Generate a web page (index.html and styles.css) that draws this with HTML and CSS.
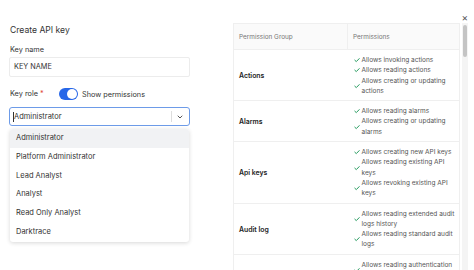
FILE: index.html
```html
<!DOCTYPE html>
<html lang="en">
  <head>
    <meta charset="UTF-8" />
    <meta name="viewport" content="width=device-width, initial-scale=1.0" />
    <title>Create API key</title>
    <link rel="stylesheet" href="styles.css">
  </head>
  <body>
    <div class="page">
      <div class="form">
        <h1>Create API key</h1>
        <label class="label">Key name</label>
        <div class="input">KEY NAME</div>
        <div class="role-row">
          <span class="label">Key role <span class="req">*</span></span>
          <span class="toggle"><span class="knob"></span></span>
          <span class="toggle-text">Show permissions</span>
        </div>
        <div class="select">
          <span class="caret"></span>
          <span class="select-value">Administrator</span>
          <span class="sep"></span>
          <svg class="chevron" width="8" height="8" viewBox="0 0 8 8">
            <path d="M2 3L4 5L6 3" fill="none" stroke="#555" stroke-width="1" stroke-linecap="round" />
          </svg>
        </div>
        <ul class="menu">
          <li class="active">Administrator</li>
          <li>Platform Administrator</li>
          <li>Lead Analyst</li>
          <li>Analyst</li>
          <li>Read Only Analyst</li>
          <li>Darktrace</li>
        </ul>
      </div>

      <div class="perm">
        <div class="close-row"><span class="close">×</span></div>
        <div class="perm-body">
          <table class="table">
            <thead>
              <tr>
                <th>Permission Group</th>
                <th>Permissions</th>
              </tr>
            </thead>
            <tbody id="rows"></tbody>
          </table>
          <div class="scroll"><div class="thumb"></div></div>
        </div>
      </div>
    </div>

    <script>
      const groups = [
        ["Actions", ["Allows invoking actions", "Allows reading actions", "Allows creating or updating actions"]],
        ["Alarms", ["Allows reading alarms", "Allows creating or updating alarms"]],
        ["Api keys", ["Allows creating new API keys", "Allows reading existing API keys", "Allows revoking existing API keys"]],
        ["Audit log", ["Allows reading extended audit logs history", "Allows reading standard audit logs"]],
        ["Auth", ["Allows reading authentication settings", "Allows updating authentication settings"]],
      ];

      const check =
        '<svg class="check" width="6" height="6" viewBox="0 0 6 6"><path d="M0.8 3.2L2.3 4.6L5.2 1.6" fill="none" stroke="#259a5e" stroke-width="1" stroke-linecap="round" stroke-linejoin="round"/></svg>';

      const tbody = document.getElementById("rows");
      for (const [name, perms] of groups) {
        const tr = document.createElement("tr");
        const items = perms
          .map((p) => `<li>${check}<span>${p}</span></li>`)
          .join("");
        tr.innerHTML = `<td class="group">${name}</td><td><ul class="perms">${items}</ul></td>`;
        tbody.appendChild(tr);
      }
    </script>
  </body>
</html>
```

FILE: styles.css
```css
body {
  margin: 0;
  background-color: #fff;
  color: #2b2b2b;
  font-family: Inter, "Noto Sans", sans-serif;
  overflow: hidden;
}

.page {
  display: flex;
  height: 270px;
  padding-left: 9px;
  box-sizing: border-box;
  overflow: hidden;
}

.form {
  width: 181px;
  padding-top: 24px;
  flex-shrink: 0;
}

h1 {
  margin: 0 0 0 1px;
  font-size: 8.6px;
  line-height: 12px;
  font-weight: 400;
  color: #333;
}

.label {
  display: block;
  margin: 8px 0 1px 1px;
  font-size: 7.3px;
  line-height: 12px;
  color: #333;
}

.input {
  height: 20px;
  box-sizing: border-box;
  border: 1px solid #ececec;
  border-radius: 2px;
  padding-left: 4px;
  font-size: 7.3px;
  line-height: 18px;
  color: #333;
}

.role-row {
  display: flex;
  align-items: center;
  margin-top: 11px;
  height: 12px;
}

.role-row .label {
  margin: 0 0 0 1px;
  width: 49px;
}

.req {
  color: #e0453a;
}

.toggle {
  width: 19px;
  height: 12px;
  border-radius: 6px;
  background-color: #2767e8;
  display: flex;
  justify-content: flex-end;
  align-items: center;
  padding: 0 1px;
  box-sizing: border-box;
}

.knob {
  width: 10px;
  height: 10px;
  border-radius: 50%;
  background-color: #fff;
}

.toggle-text {
  margin-left: 4px;
  font-size: 7.3px;
  color: #333;
}

.select {
  margin-top: 7px;
  height: 19px;
  box-sizing: border-box;
  border: 1px solid #6d9be8;
  border-radius: 3px;
  display: flex;
  align-items: center;
  padding-left: 3px;
  font-size: 7.5px;
  color: #333;
}

.caret {
  width: 1px;
  height: 10px;
  background-color: #333;
}

.select-value {
  flex-grow: 1;
}

.sep {
  width: 1px;
  height: 11px;
  background-color: #ddd;
}

.chevron {
  margin: 0 5px 0 4px;
}

.menu {
  list-style: none;
  margin: 3px 1px 0 1px;
  padding: 0;
  border-radius: 3px;
  background-color: #fff;
  box-shadow: 0 1px 4px rgba(0, 0, 0, 0.16);
  overflow: hidden;
}

.menu li {
  height: 18.8px;
  line-height: 18.8px;
  padding-left: 6px;
  font-size: 7.5px;
  color: #333;
}

.menu li.active {
  background-color: #f1f2f4;
}

.perm {
  margin-left: 43px;
  width: 236px;
  display: flex;
  flex-direction: column;
}

.close-row {
  height: 23px;
  flex-shrink: 0;
  display: flex;
  justify-content: flex-end;
  align-items: flex-end;
}

.close {
  font-size: 10px;
  line-height: 10px;
  color: #555;
  margin: 0 1px 1px 0;
}

.perm-body {
  display: flex;
  align-items: flex-start;
  gap: 2px;
}

.table {
  width: 227px;
  flex-shrink: 0;
  border-collapse: collapse;
  table-layout: fixed;
  border-left: 1px solid #efefef;
  border-right: 1px solid #efefef;
}

.table th {
  height: 25px;
  padding: 0 5px;
  background-color: #fafafa;
  border-top: 1px solid #efefef;
  border-bottom: 1px solid #efefef;
  text-align: left;
  font-size: 6.4px;
  font-weight: 400;
  color: #777;
}

.table th:first-child {
  width: 103px;
  border-right: 1px solid #efefef;
}

.table td {
  padding: 5px 2px 4px 5px;
  border-bottom: 1px solid #efefef;
  vertical-align: middle;
}

.table td:last-child {
  padding-left: 6px;
}

.group {
  font-size: 6.9px;
  font-weight: 600;
  color: #222;
}

.perms {
  list-style: none;
  margin: 0;
  padding: 0;
}

.perms li {
  display: flex;
  align-items: center;
  gap: 2px;
  font-size: 6.5px;
  line-height: 10.3px;
  color: #555;
}

.check {
  flex-shrink: 0;
}

.scroll {
  width: 6px;
  height: 247px;
  background-color: #f4f4f4;
  padding-top: 2px;
  box-sizing: border-box;
}

.thumb {
  height: 32px;
  margin: 0 1px;
  border-radius: 3px;
  background-color: #c4c4c4;
}
```
